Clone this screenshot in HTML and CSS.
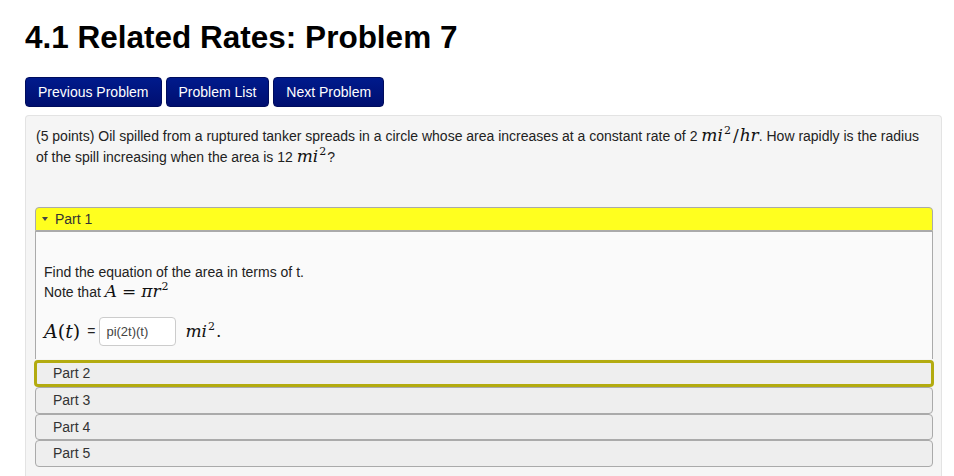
FILE: index.html
```html
<!DOCTYPE html>
<html>
<head>
<meta charset="utf-8">
<link rel="stylesheet" href="styles.css">
</head>
<body>
<div class="page">
  <h1 class="title">4.1 Related Rates: Problem 7</h1>
  <div class="nav">
    <a class="btn">Previous Problem</a>
    <a class="btn">Problem List</a>
    <a class="btn">Next Problem</a>
  </div>
  <div class="well">
    <p class="problem">(5 points) Oil spilled from a ruptured tanker spreads in a circle whose area increases at a constant rate of 2 <span class="m">mi<sup>2</sup><span class="up sl">/</span>hr</span>. How rapidly is the radius of the spill increasing when the area is 12 <span class="m">mi<sup>2</sup></span>?</p>
    <div class="parts">
      <div class="part-head open"><span class="tri"></span>Part 1</div>
      <div class="part-body">
        <div class="line">Find the equation of the area in terms of t.</div>
        <div class="line">Note that <span class="m">A<span class="up op">=</span>πr<sup>2</sup></span></div>
        <div class="answer"><span class="m">A<span class="up">(</span>t<span class="up">)</span></span><span class="eq">=</span><span class="input">pi(2t)(t)</span><span class="m">mi<sup>2</sup><span class="up">.</span></span></div>
      </div>
      <div class="part-head focus">Part 2</div>
      <div class="part-head">Part 3</div>
      <div class="part-head">Part 4</div>
      <div class="part-head">Part 5</div>
    </div>
  </div>
</div>
</body>
</html>
```
FILE: styles.css
```css
html, body {
  margin: 0;
  padding: 0;
  background: #ffffff;
  font-family: "Liberation Sans", Arial, sans-serif;
  color: #222;
}
.page {
  padding: 20px 12px 0 25px;
}
.title {
  margin: 0;
  font-size: 31.5px;
  line-height: 35px;
  font-weight: bold;
  color: #000;
}
.nav {
  margin-top: 22px;
  display: flex;
  gap: 4px;
}
.btn {
  display: block;
  height: 30px;
  box-sizing: border-box;
  padding: 0 12px;
  line-height: 29px;
  font-size: 14px;
  color: #fff;
  background: linear-gradient(#001a8c, #000f70);
  border: 1px solid #000c5c;
  border-radius: 4px;
}
.well {
  margin-top: 8px;
  background: #f5f5f5;
  border: 1px solid #e3e3e3;
  border-bottom: none;
  border-radius: 4px 4px 0 0;
  padding: 10px 8px 20px 9px;
  height: 400px;
}
.problem {
  margin: 0 0 39px 1px;
  font-size: 14px;
  line-height: 21px;
  color: #222;
}
.m {
  font-family: "DejaVu Serif", "Liberation Serif", serif;
  font-style: italic;
  font-size: 17px;
  line-height: 1;
  color: #111;
}
.m sup {
  font-style: normal;
  font-size: 11px;
  line-height: 1;
  vertical-align: baseline;
  position: relative;
  top: -7px;
  margin-left: 1px;
  margin-right: 1px;
}
.up {
  font-style: normal;
}
.sl {
  margin: 0 1px;
}
.op {
  margin: 0 5px;
}
.part-head {
  height: 26.5px;
  box-sizing: border-box;
  border: 1px solid #aaa;
  border-radius: 4px;
  background: #eeeeee;
  font-size: 14px;
  line-height: 24px;
  padding-left: 17px;
  color: #333;
}
.part-head.open {
  height: 24px;
  line-height: 22px;
  background: #ffff1f;
  border-radius: 4px 4px 0 0;
  padding-left: 5px;
  display: flex;
  align-items: center;
  gap: 7px;
}
.tri {
  width: 0;
  height: 0;
  border-left: 3.5px solid transparent;
  border-right: 3.5px solid transparent;
  border-top: 4px solid #444;
  margin-left: 1px;
}
.part-head.focus {
  border: 3px solid #b3ab10;
  line-height: 20px;
  padding-left: 16px;
  margin: 1px -1px 0 -1px;
  height: 27px;
}
.part-body {
  background: #fafafa;
  border-left: 1px solid #aaa;
  border-right: 1px solid #aaa;
  border-top: 1px solid #aaa;
  padding: 30px 8px 0 8px;
  height: 97px;
  font-size: 14px;
  color: #222;
}
.line {
  line-height: 20px;
}
.answer {
  margin-top: 14px;
  display: flex;
  align-items: center;
  height: 30px;
}
.answer .m {
  font-size: 19px;
}
.answer .m:last-child {
  font-size: 17px;
}
.eq {
  margin: 0 4px 0 7px;
}
.input {
  display: inline-block;
  width: 77px;
  height: 29px;
  box-sizing: border-box;
  border: 1px solid #ccc;
  border-radius: 4px;
  background: #fff;
  font-size: 13px;
  line-height: 27px;
  padding-left: 6px;
  color: #444;
  margin-right: 9px;
}
```
